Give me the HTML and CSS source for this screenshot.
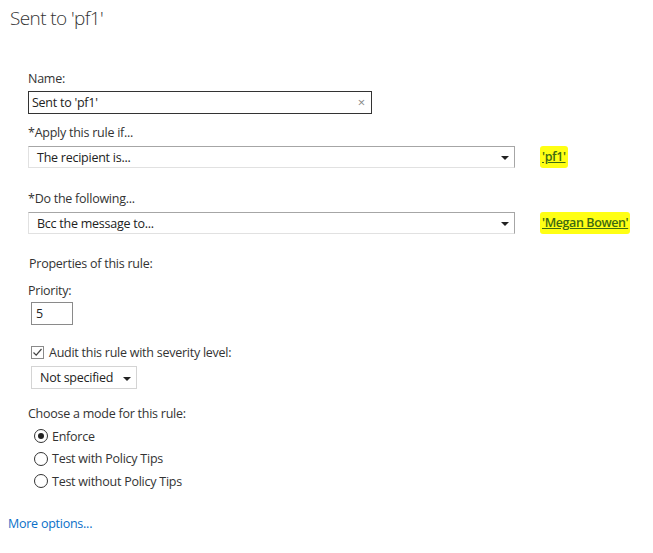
FILE: index.html
```html
<!DOCTYPE html>
<html>
<head>
<meta charset="utf-8">
<link rel="stylesheet" href="styles.css">
</head>
<body>
<h1 class="title">Sent to 'pf1'</h1>
<div class="form">
  <div class="label first">Name:</div>
  <div class="textbox">
    <span class="tb-text">Sent to 'pf1'</span>
    <span class="clear">×</span>
  </div>

  <div class="label gap10">*Apply this rule if...</div>
  <div class="rule-row">
    <div class="select wide"><span>The recipient is...</span><span class="arrow"></span></div>
    <a class="hl">'pf1'</a>
  </div>

  <div class="label gap22">*Do the following...</div>
  <div class="rule-row">
    <div class="select wide"><span>Bcc the message to...</span><span class="arrow"></span></div>
    <a class="hl">'Megan Bowen'</a>
  </div>

  <div class="label props">Properties of this rule:</div>
  <div class="label gap9">Priority:</div>
  <div class="priority">5</div>

  <div class="check-row">
    <span class="checkbox"><svg width="13" height="13" viewBox="0 0 13 13"><rect x="0.5" y="0.5" width="12" height="12" fill="#fff" stroke="#8a8a8a"/><path d="M2.5 6.5 L5.2 9.2 L10.5 3" fill="none" stroke="#444" stroke-width="1.2"/></svg></span>
    <span>Audit this rule with severity level:</span>
  </div>
  <div class="select small"><span>Not specified</span><span class="arrow"></span></div>

  <div class="label mode">Choose a mode for this rule:</div>
  <div class="radios">
    <div class="radio-row"><span class="radio checked"></span><span>Enforce</span></div>
    <div class="radio-row"><span class="radio"></span><span>Test with Policy Tips</span></div>
    <div class="radio-row"><span class="radio"></span><span>Test without Policy Tips</span></div>
  </div>
</div>
<a class="more">More options...</a>
</body>
</html>
```
FILE: styles.css
```css
html, body {
  margin: 0;
  padding: 0;
  background: #fff;
}
body {
  font-family: "Segoe UI", "Open Sans", "Noto Sans", sans-serif;
  font-size: 12.5px;
  letter-spacing: -0.25px;
  color: #333;
  width: 653px;
  height: 553px;
  overflow: hidden;
}
.title {
  margin: 4px 0 0 10px;
  font-size: 19px;
  font-weight: 300;
  letter-spacing: -0.6px;
  line-height: 28px;
  color: #333;
}
.form {
  padding-left: 28px;
}
.label {
  line-height: 18px;
  height: 18px;
  color: #333;
  white-space: nowrap;
}
.first { margin-top: 38px; }
.gap10 { margin-top: 10px; }
.gap22 { margin-top: 22px; }
.gap9 { margin-top: 9px; }
.props { margin-top: 21px; padding-left: 1px; }
.textbox {
  margin-top: 3px;
  height: 21px;
  border: 1px solid #333;
  display: flex;
  align-items: center;
  justify-content: space-between;
  padding: 0 6px 0 3px;
  box-sizing: content-box;
  width: 333px;
  color: #222;
}
.clear {
  color: #888;
  font-size: 13px;
  line-height: 1;
}
.rule-row {
  margin-top: 4px;
  display: flex;
  align-items: center;
}
.select {
  box-sizing: border-box;
  height: 22px;
  display: flex;
  align-items: center;
  justify-content: space-between;
  color: #222;
  background: #fff;
}
.select.wide {
  width: 487px;
  border-top: 1px solid #a6a6a6;
  border-right: 1px solid #a6a6a6;
  border-left: 1px solid #e1e1e1;
  border-bottom: 1px solid #e1e1e1;
  padding: 0 5px 0 8px;
}
.arrow {
  width: 0;
  height: 0;
  border-left: 4px solid transparent;
  border-right: 4px solid transparent;
  border-top: 4px solid #222;
  margin-top: 2px;
}
.hl {
  margin-left: 25px;
  color: #3d6a12;
  font-weight: 600;
  letter-spacing: -0.4px;
  text-decoration: underline;
  background: #ffff14;
  padding: 2px 2px 3px 2px;
  border-radius: 3px;
  white-space: nowrap;
}
.priority {
  margin: 2px 0 0 3px;
  width: 42px;
  height: 23px;
  box-sizing: border-box;
  border: 1px solid #8a8a8a;
  padding-left: 4px;
  line-height: 21px;
  color: #222;
}
.check-row {
  margin: 18px 0 0 3px;
  display: flex;
  align-items: center;
  gap: 5px;
  height: 18px;
  white-space: nowrap;
}
.checkbox {
  display: flex;
}
.select.small {
  margin: 5px 0 0 3px;
  width: 106px;
  height: 23px;
  border: 1px solid #d4d4d4;
  padding: 0 5px 0 8px;
}
.mode {
  margin-top: 16px;
}
.radios {
  margin-top: 2px;
  padding-left: 6px;
}
.radio-row {
  display: flex;
  align-items: center;
  gap: 4px;
  height: 22.5px;
  white-space: nowrap;
}
.radio {
  width: 14px;
  height: 14px;
  border: 1px solid #333;
  border-radius: 50%;
  box-sizing: border-box;
  position: relative;
  background: #fff;
}
.radio.checked::after {
  content: "";
  position: absolute;
  left: 3px;
  top: 3px;
  width: 6px;
  height: 6px;
  border-radius: 50%;
  background: #222;
}
.more {
  display: block;
  margin: 22px 0 0 8px;
  line-height: 18px;
  color: #0a6fc8;
  text-decoration: none;
}
```
